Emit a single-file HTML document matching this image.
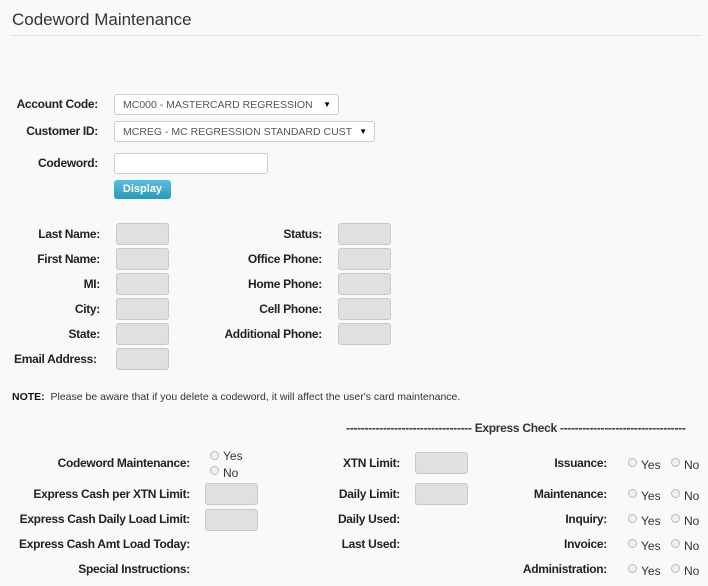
<!DOCTYPE html><html><head><style>
body{margin:0;width:708px;height:586px;background:#f9f9f9;font-family:"Liberation Sans",Arial,sans-serif;position:relative;overflow:hidden;color:#222}
.a{position:absolute;white-space:nowrap}
.l{position:absolute;font-weight:bold;font-size:12px;text-align:right;transform:translateY(-50%);white-space:nowrap;letter-spacing:-0.3px}
.b{position:absolute;background:#e0e0e0;border:1px solid #c8c8c8;border-radius:3px;width:53px;height:22px;box-sizing:border-box}
.s{position:absolute;background:#fff;border:1px solid #ccc;border-radius:3px;font-size:10.5px;color:#555;box-sizing:border-box;padding:4px 8px}
.s:after{content:"▼";position:absolute;right:7px;top:5px;font-size:8px;color:#000}
.r{position:absolute;width:9px;height:9px;border:1px solid #bbb;border-radius:50%;background:#f0f0f0;box-sizing:border-box}
.t{position:absolute;font-size:12px;color:#333}
</style></head><body>
<div class="a" style="left:12px;top:10px;font-size:17px;color:#333">Codeword Maintenance</div>
<div class="a" style="left:11px;top:35px;width:690px;height:1px;background:#e3e3e3"></div>

<div class="l" style="right:610px;top:104px">Account Code:</div>
<div class="s" style="left:114px;top:94px;width:225px;height:21px">MC000 - MASTERCARD REGRESSION</div>
<div class="l" style="right:610px;top:131px">Customer ID:</div>
<div class="s" style="left:114px;top:121px;width:261px;height:21px">MCREG - MC REGRESSION STANDARD CUST</div>
<div class="l" style="right:610px;top:163px">Codeword:</div>
<div class="a" style="left:114px;top:153px;width:154px;height:21px;background:#fff;border:1px solid #ccc;border-radius:3px;box-sizing:border-box"></div>
<div class="a" style="left:114px;top:180px;width:57px;height:19px;background:linear-gradient(#5bc0de,#2f96b4);border-radius:3px;color:#fff;font-weight:bold;font-size:11px;text-align:center;line-height:19px">Display</div>

<div class="l" style="right:608px;top:234px">Last Name:</div><div class="b" style="left:116px;top:223px"></div>
<div class="l" style="right:608px;top:259px">First Name:</div><div class="b" style="left:116px;top:248px"></div>
<div class="l" style="right:608px;top:284px">MI:</div><div class="b" style="left:116px;top:273px"></div>
<div class="l" style="right:608px;top:309px">City:</div><div class="b" style="left:116px;top:298px"></div>
<div class="l" style="right:608px;top:334px">State:</div><div class="b" style="left:116px;top:323px"></div>
<div class="l" style="left:14px;top:359px">Email Address:</div><div class="b" style="left:116px;top:348px"></div>
<div class="l" style="right:386px;top:234px">Status:</div><div class="b" style="left:338px;top:223px"></div>
<div class="l" style="right:386px;top:259px">Office Phone:</div><div class="b" style="left:338px;top:248px"></div>
<div class="l" style="right:386px;top:284px">Home Phone:</div><div class="b" style="left:338px;top:273px"></div>
<div class="l" style="right:386px;top:309px">Cell Phone:</div><div class="b" style="left:338px;top:298px"></div>
<div class="l" style="right:386px;top:334px">Additional Phone:</div><div class="b" style="left:338px;top:323px"></div>

<div class="a" style="left:12px;top:391px;font-size:10.5px;color:#333"><b style="color:#111">NOTE:</b>&nbsp; Please be aware that if you delete a codeword, it will affect the user's card maintenance.</div>

<div class="a" style="left:346px;top:421px;font-size:12px;font-weight:bold;color:#333;letter-spacing:-0.3px">---------------------------------- Express Check ----------------------------------</div>

<div class="l" style="right:518px;top:463px">Codeword Maintenance:</div>
<div class="r" style="left:210px;top:451px"></div><div class="t" style="left:223px;top:449px">Yes</div>
<div class="r" style="left:210px;top:466px"></div><div class="t" style="left:223px;top:466px">No</div>
<div class="l" style="right:518px;top:494px">Express Cash per XTN Limit:</div><div class="b" style="left:205px;top:483px"></div>
<div class="l" style="right:518px;top:519px">Express Cash Daily Load Limit:</div><div class="b" style="left:205px;top:509px"></div>
<div class="l" style="right:518px;top:544px">Express Cash Amt Load Today:</div>
<div class="l" style="right:518px;top:569px">Special Instructions:</div>

<div class="l" style="right:308px;top:463px">XTN Limit:</div><div class="b" style="left:415px;top:452px"></div>
<div class="l" style="right:308px;top:494px">Daily Limit:</div><div class="b" style="left:415px;top:483px"></div>
<div class="l" style="right:308px;top:519px">Daily Used:</div>
<div class="l" style="right:308px;top:544px">Last Used:</div>

<div class="l" style="right:101px;top:463px">Issuance:</div>
<div class="l" style="right:101px;top:494px">Maintenance:</div>
<div class="l" style="right:101px;top:519px">Inquiry:</div>
<div class="l" style="right:101px;top:544px">Invoice:</div>
<div class="l" style="right:101px;top:569px">Administration:</div>

<div class="r" style="left:628px;top:458px"></div><div class="t" style="left:641px;top:458px">Yes</div><div class="r" style="left:671px;top:458px"></div><div class="t" style="left:684px;top:458px">No</div>
<div class="r" style="left:628px;top:489px"></div><div class="t" style="left:641px;top:489px">Yes</div><div class="r" style="left:671px;top:489px"></div><div class="t" style="left:684px;top:489px">No</div>
<div class="r" style="left:628px;top:514px"></div><div class="t" style="left:641px;top:514px">Yes</div><div class="r" style="left:671px;top:514px"></div><div class="t" style="left:684px;top:514px">No</div>
<div class="r" style="left:628px;top:539px"></div><div class="t" style="left:641px;top:539px">Yes</div><div class="r" style="left:671px;top:539px"></div><div class="t" style="left:684px;top:539px">No</div>
<div class="r" style="left:628px;top:564px"></div><div class="t" style="left:641px;top:564px">Yes</div><div class="r" style="left:671px;top:564px"></div><div class="t" style="left:684px;top:564px">No</div>
</body></html>
